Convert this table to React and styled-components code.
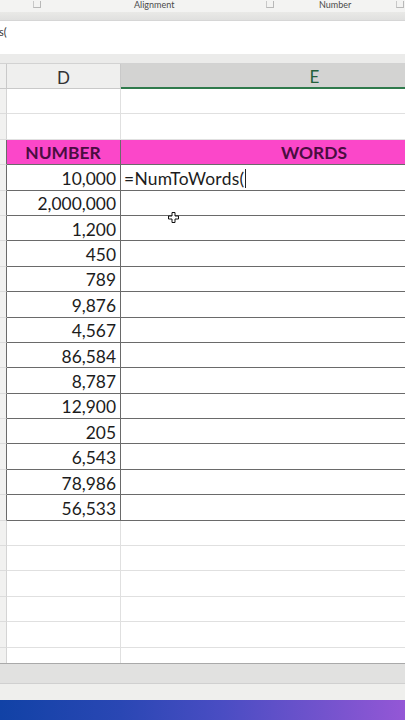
import React from 'react'
import styled, { createGlobalStyle } from 'styled-components'

const Global = createGlobalStyle`
    html, body { margin: 0; padding: 0; background: #fff; }
    body { font-family: Lato, "Noto Sans", sans-serif; }
`

const Page = styled.div`
    width: 405px;
    height: 720px;
    display: flex;
    flex-direction: column;
    overflow: hidden;
    position: relative;
    background: #fff;
`

// ribbon group labels
const Ribbon = styled.div`
    height: 12px;
    background: #f3f3f2;
    font-size: 9px;
    color: #4a4a4a;
    position: relative;
    flex-shrink: 0;
`

const GroupLabel = styled.span`
    position: absolute;
    left: ${(p) => p.x}px;
    top: -1px;
    line-height: 12px;
`

const Launcher = styled.span`
    position: absolute;
    left: ${(p) => p.x}px;
    top: 1px;
    width: 6px;
    height: 6px;
    border: 1px solid #b8b8b8;
    border-top: none;
    border-left-color: #c8c8c8;
`

const RibbonEdge = styled.div`
    height: 8px;
    flex-shrink: 0;
    background: linear-gradient(#e9e9e7, #e0e0df);
    border-bottom: 1px solid #d6d6d6;
`

const FormulaBar = styled.div`
    height: 33px;
    flex-shrink: 0;
    background: #fff;
    font-size: 11px;
    color: #333;
    padding: 4px 0 0 0;
    box-sizing: border-box;
    margin-left: -1px;
`

const Gap = styled.div`
    height: 9px;
    flex-shrink: 0;
    background: #ebebea;
    border-bottom: 1px solid #d2d2d2;
`

const Sheet = styled.div`
    height: 599px;
    flex-shrink: 0;
    overflow: hidden;
    position: relative;
`

const Row = styled.div`
    display: grid;
    grid-template-columns: 7px 114px 388px;
    height: ${(p) => p.h}px;
`

const RowHead = styled.div`
    background: #f1f1f0;
    border-bottom: 1px solid #dcdcdc;
    border-right: 1px solid ${(p) => (p.dark ? '#6a6a6a' : '#d4d4d4')};
    box-sizing: border-box;
`

const ColHead = styled.div`
    background: ${(p) => (p.active ? '#d3d3d2' : '#efefee')};
    color: ${(p) => (p.active ? '#24603c' : '#333')};
    border-right: 1px solid #c9c9c9;
    border-bottom: ${(p) => (p.active ? '2px solid #2f7a4c' : '1px solid #c9c9c9')};
    box-sizing: border-box;
    display: flex;
    align-items: center;
    justify-content: center;
    font-size: 17px;
    padding-top: 2px;
`

const Cell = styled.div`
    box-sizing: border-box;
    border-right: 1px solid ${(p) => (p.kind === 'plain' ? '#e0e0e0' : '#6a6a6a')};
    border-bottom: 1px solid ${(p) => (p.kind === 'plain' ? '#e0e0e0' : '#6a6a6a')};
    background: ${(p) => (p.kind === 'head' ? '#fb47c9' : '#fff')};
    color: ${(p) => (p.kind === 'head' ? '#4a0d40' : '#1c1c1c')};
    font-weight: ${(p) => (p.kind === 'head' ? 700 : 400)};
    font-size: 17.4px;
    display: flex;
    align-items: center;
    justify-content: ${(p) => (p.align === 'right' ? 'flex-end' : p.align === 'center' ? 'center' : 'flex-start')};
    padding: 2px 4px 0 3px;
    white-space: nowrap;
    overflow: hidden;
`

const Caret = styled.span`
    display: inline-block;
    width: 1px;
    height: 19px;
    background: #222;
    margin-left: 1px;
`

const WordsCell = styled(Cell)`
    justify-content: flex-start;
    padding-left: 3px;
    letter-spacing: 0.3px;
`

const Pointer = styled.svg`
    position: absolute;
    left: 168px;
    top: 148px;
`

const Scroll = styled.div`
    height: 19px;
    flex-shrink: 0;
    background: #e1e1e0;
    border-top: 1px solid #a9a9a9;
    border-bottom: 1px solid #d0d0d0;
`

const Status = styled.div`
    height: 16px;
    flex-shrink: 0;
    background: #efefed;
`

const Taskbar = styled.div`
    flex: 1;
    background: linear-gradient(90deg, #1142a6 0%, #2a47b4 30%, #4a4dc3 55%, #7353cd 80%, #9457d6 100%);
`

const numbers = ['10,000', '2,000,000', '1,200', '450', '789', '9,876', '4,567', '86,584', '8,787', '12,900', '205', '6,543', '78,986', '56,533']

const H = 25.4

export default function App() {
    return (
        <Page>
            <Global />
            <Ribbon>
                <Launcher x={33} />
                <GroupLabel x={134}>Alignment</GroupLabel>
                <Launcher x={266} />
                <GroupLabel x={319}>Number</GroupLabel>
                <Launcher x={396} />
            </Ribbon>
            <RibbonEdge />
            <FormulaBar>s(</FormulaBar>
            <Gap />
            <Sheet>
                <Row h={25}>
                    <ColHead />
                    <ColHead>D</ColHead>
                    <ColHead active>E</ColHead>
                </Row>
                <Row h={H}>
                    <RowHead />
                    <Cell kind="plain" />
                    <Cell kind="plain" />
                </Row>
                <Row h={H}>
                    <RowHead />
                    <Cell kind="plain" />
                    <Cell kind="plain" />
                </Row>
                <Row h={H}>
                    <RowHead dark />
                    <Cell kind="head" align="center">NUMBER</Cell>
                    <Cell kind="head" align="center">WORDS</Cell>
                </Row>
                {numbers.map((n, i) => (
                    <Row h={H} key={n}>
                        <RowHead dark />
                        <Cell kind="data" align="right">{n}</Cell>
                        {i === 0 ? (
                            <WordsCell kind="data">
                                =NumToWords(<Caret />
                            </WordsCell>
                        ) : (
                            <Cell kind="data" />
                        )}
                    </Row>
                ))}
                {[0, 1, 2, 3, 4, 5].map((i) => (
                    <Row h={H} key={'e' + i}>
                        <RowHead />
                        <Cell kind="plain" />
                        <Cell kind="plain" />
                    </Row>
                ))}
                <Pointer width="11" height="11" viewBox="0 0 11 11">
                    <path d="M4 0.5h3v3.5h3.5v3h-3.5v3.5h-3v-3.5h-3.5v-3h3.5z" fill="#fff" stroke="#111" strokeWidth="1" />
                </Pointer>
            </Sheet>
            <Scroll />
            <Status />
            <Taskbar />
        </Page>
    )
}
